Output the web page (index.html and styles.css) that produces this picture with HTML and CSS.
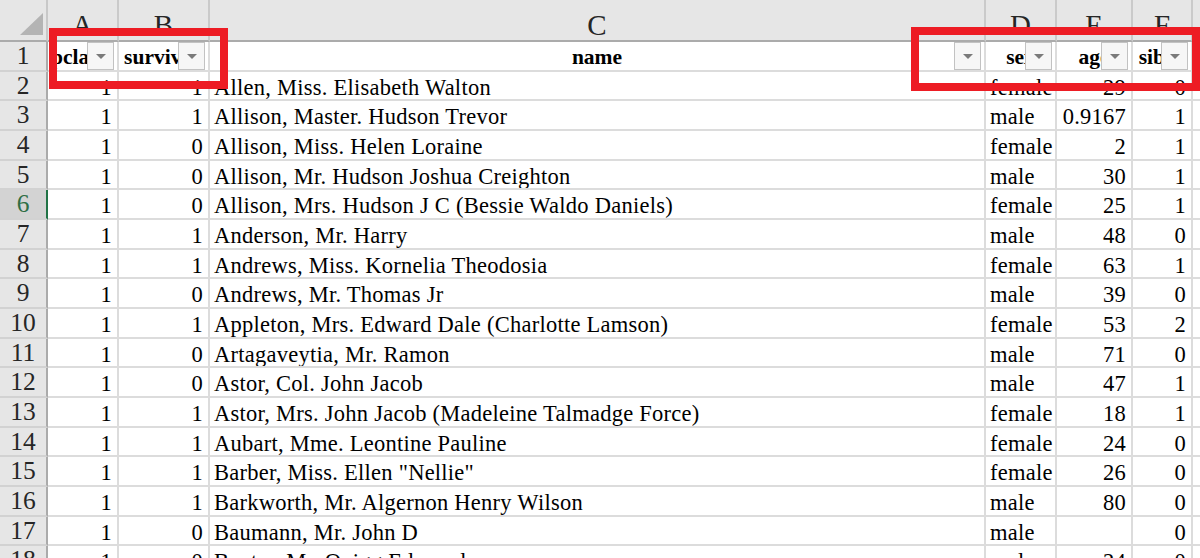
FILE: index.html
```html
<!DOCTYPE html>
<html lang="en">
<head>
<meta charset="utf-8">
<title>titanic3 – Excel</title>
<link rel="stylesheet" href="styles.css">
</head>
<body>
<div class="sheet">
  <div class="row colhead">
    <div class="corner"><svg class="corner-tri" width="23" height="22" viewBox="0 0 23 22"><polygon points="23,0 23,22 0,22" fill="#b4b4b4"/></svg></div>
    <div class="ch">A</div>
    <div class="ch">B</div>
    <div class="ch">C</div>
    <div class="ch">D</div>
    <div class="ch">E</div>
    <div class="ch">F</div>
    <div class="ch last"></div>
  </div>

  <div class="row">
    <div class="rh">1</div>
    <div class="c hdr hdr-left">pclass<span class="dd"></span></div>
    <div class="c hdr">survived<span class="dd"></span></div>
    <div class="c hdr">name<span class="dd"></span></div>
    <div class="c hdr">sex<span class="dd"></span></div>
    <div class="c hdr">age<span class="dd"></span></div>
    <div class="c hdr">sibsp<span class="dd"></span></div>
    <div class="c last"></div>
  </div>

  <div class="row">
    <div class="rh">2</div>
    <div class="c num">1</div><div class="c num">1</div>
    <div class="c txt">Allen, Miss. Elisabeth Walton</div>
    <div class="c txt">female</div><div class="c num">29</div><div class="c num">0</div><div class="c last"></div>
  </div>
  <div class="row">
    <div class="rh">3</div>
    <div class="c num">1</div><div class="c num">1</div>
    <div class="c txt">Allison, Master. Hudson Trevor</div>
    <div class="c txt">male</div><div class="c num">0.9167</div><div class="c num">1</div><div class="c last"></div>
  </div>
  <div class="row">
    <div class="rh">4</div>
    <div class="c num">1</div><div class="c num">0</div>
    <div class="c txt">Allison, Miss. Helen Loraine</div>
    <div class="c txt">female</div><div class="c num">2</div><div class="c num">1</div><div class="c last"></div>
  </div>
  <div class="row">
    <div class="rh">5</div>
    <div class="c num">1</div><div class="c num">0</div>
    <div class="c txt">Allison, Mr. Hudson Joshua Creighton</div>
    <div class="c txt">male</div><div class="c num">30</div><div class="c num">1</div><div class="c last"></div>
  </div>
  <div class="row">
    <div class="rh sel">6</div>
    <div class="c num">1</div><div class="c num">0</div>
    <div class="c txt">Allison, Mrs. Hudson J C (Bessie Waldo Daniels)</div>
    <div class="c txt">female</div><div class="c num">25</div><div class="c num">1</div><div class="c last"></div>
  </div>
  <div class="row">
    <div class="rh">7</div>
    <div class="c num">1</div><div class="c num">1</div>
    <div class="c txt">Anderson, Mr. Harry</div>
    <div class="c txt">male</div><div class="c num">48</div><div class="c num">0</div><div class="c last"></div>
  </div>
  <div class="row">
    <div class="rh">8</div>
    <div class="c num">1</div><div class="c num">1</div>
    <div class="c txt">Andrews, Miss. Kornelia Theodosia</div>
    <div class="c txt">female</div><div class="c num">63</div><div class="c num">1</div><div class="c last"></div>
  </div>
  <div class="row">
    <div class="rh">9</div>
    <div class="c num">1</div><div class="c num">0</div>
    <div class="c txt">Andrews, Mr. Thomas Jr</div>
    <div class="c txt">male</div><div class="c num">39</div><div class="c num">0</div><div class="c last"></div>
  </div>
  <div class="row">
    <div class="rh">10</div>
    <div class="c num">1</div><div class="c num">1</div>
    <div class="c txt">Appleton, Mrs. Edward Dale (Charlotte Lamson)</div>
    <div class="c txt">female</div><div class="c num">53</div><div class="c num">2</div><div class="c last"></div>
  </div>
  <div class="row">
    <div class="rh">11</div>
    <div class="c num">1</div><div class="c num">0</div>
    <div class="c txt">Artagaveytia, Mr. Ramon</div>
    <div class="c txt">male</div><div class="c num">71</div><div class="c num">0</div><div class="c last"></div>
  </div>
  <div class="row">
    <div class="rh">12</div>
    <div class="c num">1</div><div class="c num">0</div>
    <div class="c txt">Astor, Col. John Jacob</div>
    <div class="c txt">male</div><div class="c num">47</div><div class="c num">1</div><div class="c last"></div>
  </div>
  <div class="row">
    <div class="rh">13</div>
    <div class="c num">1</div><div class="c num">1</div>
    <div class="c txt">Astor, Mrs. John Jacob (Madeleine Talmadge Force)</div>
    <div class="c txt">female</div><div class="c num">18</div><div class="c num">1</div><div class="c last"></div>
  </div>
  <div class="row">
    <div class="rh">14</div>
    <div class="c num">1</div><div class="c num">1</div>
    <div class="c txt">Aubart, Mme. Leontine Pauline</div>
    <div class="c txt">female</div><div class="c num">24</div><div class="c num">0</div><div class="c last"></div>
  </div>
  <div class="row">
    <div class="rh">15</div>
    <div class="c num">1</div><div class="c num">1</div>
    <div class="c txt">Barber, Miss. Ellen "Nellie"</div>
    <div class="c txt">female</div><div class="c num">26</div><div class="c num">0</div><div class="c last"></div>
  </div>
  <div class="row">
    <div class="rh">16</div>
    <div class="c num">1</div><div class="c num">1</div>
    <div class="c txt">Barkworth, Mr. Algernon Henry Wilson</div>
    <div class="c txt">male</div><div class="c num">80</div><div class="c num">0</div><div class="c last"></div>
  </div>
  <div class="row">
    <div class="rh">17</div>
    <div class="c num">1</div><div class="c num">0</div>
    <div class="c txt">Baumann, Mr. John D</div>
    <div class="c txt">male</div><div class="c num"></div><div class="c num">0</div><div class="c last"></div>
  </div>
  <div class="row">
    <div class="rh">18</div>
    <div class="c num">1</div><div class="c num">0</div>
    <div class="c txt">Baxter, Mr. Quigg Edmond</div>
    <div class="c txt">male</div><div class="c num">24</div><div class="c num">0</div><div class="c last"></div>
  </div>

  <div class="mark mark-left"></div>
  <div class="mark mark-right"></div>
</div>
</body>
</html>
```

FILE: styles.css
```css
html, body {
  margin: 0;
  padding: 0;
  background: #ffffff;
  overflow: hidden;
}

.sheet {
  position: relative;
  width: 1200px;
  height: 558px;
  overflow: hidden;
  font-family: "Liberation Serif", "Times New Roman", serif;
  color: #000;
}

.row {
  display: grid;
  grid-template-columns: 48px 71px 91px 776px 71px 76px 60px 7px;
  height: 29.67px;
}

.row > div {
  box-sizing: border-box;
  display: flex;
  align-items: flex-end;
  overflow: hidden;
  white-space: nowrap;
  min-width: 0;
}

/* column letters */
.colhead {
  height: 42px;
}

.corner {
  background: #e6e6e6;
  border-right: 2px solid #c8c8c8;
  border-bottom: 2px solid #ababab;
  justify-content: flex-end;
  padding: 0 3px 5px 0;
}

.corner-tri {
  display: block;
}

.ch {
  background: #e6e6e6;
  border-right: 2px solid #cacaca;
  border-bottom: 2px solid #ababab;
  justify-content: center;
  align-items: center !important;
  padding-top: 10px;
  font-size: 29px;
  line-height: 1;
  color: #262626;
}

.ch.last {
  border-right: none;
}

/* row numbers */
.rh {
  background: #e6e6e6;
  border-right: 2px solid #ababab;
  border-bottom: 2px solid #d2d2d2;
  justify-content: center;
  font-size: 25.5px;
  line-height: 1;
  padding-bottom: 1px;
  color: #262626;
}

.rh.sel {
  background: #d3d3d3;
  border-right-color: #217346;
  color: #2f6e45;
}

/* cells */
.c {
  position: relative;
  border-right: 2px solid #dcdcdc;
  border-bottom: 2px solid #dcdcdc;
  font-size: 22.5px;
  letter-spacing: 0.25px;
  line-height: 1;
  padding: 0 5px 0 4px;
}

.c.last {
  border-right: none;
  padding: 0;
}

.num {
  justify-content: flex-end;
}

.txt {
  justify-content: flex-start;
}

.hdr {
  font-weight: bold;
  font-size: 21.5px;
  letter-spacing: 0;
  justify-content: center;
  padding: 0 0 1px 0;
}

.hdr-left {
  justify-content: flex-start;
  padding-left: 3px;
}

/* filter dropdown buttons */
.dd {
  position: absolute;
  top: 0;
  right: 3px;
  width: 27px;
  height: 28px;
  box-sizing: border-box;
  border: 1px solid #c2c2c2;
  background: #f6f6f6;
  display: flex;
  align-items: center;
  justify-content: center;
}

.dd::after {
  content: "";
  width: 0;
  height: 0;
  border-left: 5px solid transparent;
  border-right: 5px solid transparent;
  border-top: 5px solid #7a7a7a;
}

/* red annotation rectangles */
.mark {
  position: absolute;
  box-sizing: border-box;
  border: 8px solid #ed1c24;
  pointer-events: none;
}

.mark-left {
  left: 49px;
  top: 28px;
  width: 179px;
  height: 61px;
}

.mark-right {
  left: 911px;
  top: 27px;
  width: 289px;
  height: 64px;
}
```
